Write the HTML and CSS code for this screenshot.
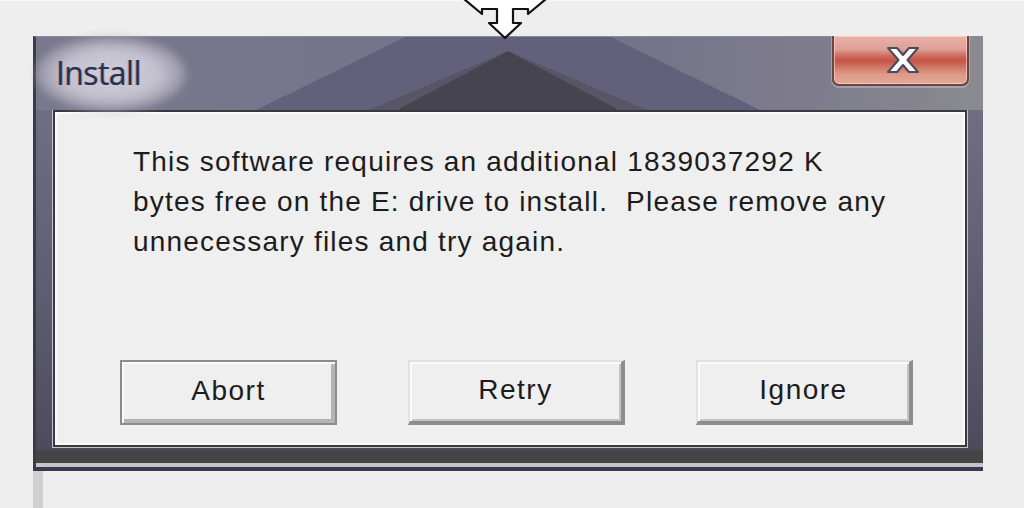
FILE: index.html
```html
<!DOCTYPE html>
<html>
<head>
<meta charset="utf-8">
<link rel="stylesheet" href="styles.css">
</head>
<body>
<div class="desktop">
  <svg class="cursor" viewBox="460 -20 90 60" width="90" height="60">
    <path d="M464,-2 L482,13 L482,8 L497,8 L497,22 L489,22 L505,37 L521,22 L513,22 L513,8 L528,8 L528,13 L546,-2 L528,-18 L505,-18 L482,-18 Z" fill="#fff" stroke="#111" stroke-width="2.2" stroke-linejoin="round"/>
  </svg>
  <div class="window">
    <div class="titlebar">
      <div class="glow"></div>
      <span class="title">Install</span>
      <div class="close">
        <svg viewBox="0 0 36 28" width="36" height="28">
          <path d="M3,2 L12,2 L18,9 L24,2 L33,2 L22.5,14 L33,26 L24,26 L18,19 L12,26 L3,26 L13.5,14 Z" fill="#fafafa" stroke="#4a4a5e" stroke-width="2" stroke-linejoin="round"/>
        </svg>
      </div>
    </div>
    <div class="panel">
      <p class="message">This software requires an additional 1839037292 K<br>bytes free on the E: drive to install.&nbsp; Please remove any<br>unnecessary files and try again.</p>
      <div class="buttons">
        <button class="btn default">Abort</button>
        <button class="btn">Retry</button>
        <button class="btn">Ignore</button>
      </div>
    </div>
    <div class="bottomframe"></div>
  </div>
  <div class="stub"></div>
</div>
</body>
</html>
```
FILE: styles.css
```css
html, body {
  margin: 0;
  padding: 0;
  width: 1024px;
  height: 508px;
  overflow: hidden;
  background: #eeeeee;
}

.desktop {
  position: relative;
  width: 1024px;
  height: 508px;
  border-top: 1px solid #f8f8f8;
  box-sizing: border-box;
  padding: 35px 0 0 33px;
}

.cursor {
  position: absolute;
  left: 460px;
  top: -20px;
  z-index: 5;
}

.window {
  position: relative;
  width: 950px;
  height: 435px;
  box-sizing: border-box;
  display: flex;
  flex-direction: column;
  background: linear-gradient(to bottom, #77758a 0%, #5e5c70 60%, #4a4858 100%);
  border-left: 3px solid #3c3a4e;
  border-top: 1px solid #8a889a;
}

.titlebar {
  position: relative;
  height: 73px;
  flex: none;
  background:
    conic-gradient(from 0deg at 472px 14px,
      transparent 0deg 113deg,
      #585666 113deg 118deg,
      #46444f 118deg 242deg,
      #585666 242deg 247deg,
      transparent 247deg 360deg),
    conic-gradient(from 0deg at 472px -50px,
      transparent 0deg 116deg,
      #62607a 116deg 244deg,
      transparent 244deg 360deg),
    linear-gradient(to right, #7a788c 0%, #74728a 60%, #7d7b8c 80%, #8a8a90 100%);
}

.glow {
  position: absolute;
  left: 0;
  top: 0;
  width: 150px;
  height: 74px;
  border-radius: 50%;
  background: radial-gradient(ellipse at center, #cfcdd8 0%, #c4c2ce 45%, rgba(170,168,184,0.6) 70%, rgba(120,118,138,0) 100%);
  filter: blur(4px);
}

.title {
  position: absolute;
  left: 20px;
  top: 14px;
  font-family: "Open Sans", "DejaVu Sans", sans-serif;
  font-size: 32px;
  letter-spacing: -0.6px;
  color: #26304a;
  text-shadow: -1px 0 0 rgba(200,60,60,0.35), 1px 0 0 rgba(60,120,220,0.35);
}

.close {
  position: absolute;
  right: 14px;
  top: -1px;
  width: 137px;
  height: 50px;
  box-sizing: border-box;
  border: 2px solid #6a4640;
  border-top: none;
  border-radius: 0 0 7px 7px;
  box-shadow: inset 0 0 0 1px rgba(255,220,210,0.6), 0 1px 0 1px rgba(200,190,200,0.5);
  background: linear-gradient(to bottom, #e8b2aa 0%, #dea096 28%, #cd6a5c 42%, #c55446 52%, #cf7464 64%, #dd9a88 80%, #e6a898 100%);
  display: flex;
  align-items: center;
  justify-content: center;
}

.close svg {
  margin-top: 0;
  margin-left: 4px;
}

.panel {
  flex: none;
  height: 337px;
  margin: 0 16px 0 17px;
  box-sizing: border-box;
  background: #efefef;
  border: 2px solid #3a3a3e;
  box-shadow: 0 0 0 1px #c4c2cc, inset 0 0 0 2px #fbfbfb;
  display: flex;
  flex-direction: column;
  justify-content: space-between;
  padding: 30px 0 20px 0;
}

.message {
  margin: 0 0 0 78px;
  font-family: "Liberation Sans", Arial, sans-serif;
  font-size: 28px;
  line-height: 40px;
  letter-spacing: 1.2px;
  color: #1c1c1c;
  white-space: nowrap;
}

.buttons {
  display: flex;
  gap: 71px;
  padding-left: 65px;
}

.btn {
  width: 217px;
  height: 65px;
  box-sizing: border-box;
  padding: 0 0 4px 0;
  margin: 0;
  font-family: "Liberation Sans", Arial, sans-serif;
  font-size: 28px;
  letter-spacing: 1.5px;
  color: #1c1c1c;
  background: #efefef;
  border-style: solid;
  border-width: 2px 4px 4px 2px;
  border-color: #e2e2e2 #8c8c8c #8c8c8c #e2e2e2;
  box-shadow: inset 2px 2px 0 #fafafa, inset -2px -2px 0 #c4c4c4;
}

.btn.default {
  border-width: 2px;
  border-color: #8c8c8c;
  box-shadow: inset 2px 2px 0 #fafafa, inset -4px -4px 0 #b4b4b4;
}

.bottomframe {
  flex: 1;
  margin-top: 3px;
  background: #454545;
  border-bottom: 4px solid #c4c4c8;
  box-shadow: 0 4px 0 0 #3a3850;
  margin-bottom: 4px;
}

.stub {
  width: 10px;
  height: 40px;
  background: #cfcfcf;
}
```
